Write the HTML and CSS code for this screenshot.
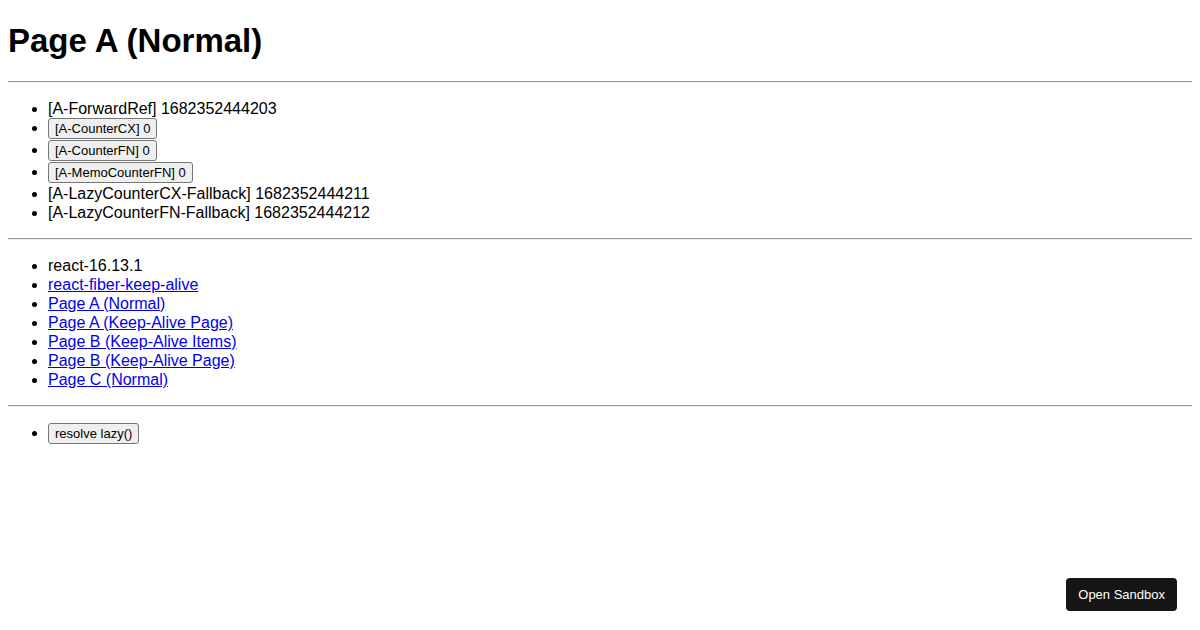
FILE: index.html
```html
<!DOCTYPE html>
<html>
<head>
<meta charset="utf-8">
<title>Page A (Normal)</title>
<link rel="stylesheet" href="styles.css">
</head>
<body>
<h1 class="title">Page A (Normal)</h1>
<hr class="rule">
<ul class="list">
  <li>[A-ForwardRef] 1682352444203</li>
  <li><button class="btn">[A-CounterCX] 0</button></li>
  <li><button class="btn">[A-CounterFN] 0</button></li>
  <li><button class="btn">[A-MemoCounterFN] 0</button></li>
  <li>[A-LazyCounterCX-Fallback] 1682352444211</li>
  <li>[A-LazyCounterFN-Fallback] 1682352444212</li>
</ul>
<hr class="rule">
<ul class="list">
  <li>react-16.13.1</li>
  <li><a href="#">react-fiber-keep-alive</a></li>
  <li><a href="#">Page A (Normal)</a></li>
  <li><a href="#">Page A (Keep-Alive Page)</a></li>
  <li><a href="#">Page B (Keep-Alive Items)</a></li>
  <li><a href="#">Page B (Keep-Alive Page)</a></li>
  <li><a href="#">Page C (Normal)</a></li>
</ul>
<hr class="rule">
<ul class="list">
  <li><button class="btn">resolve lazy()</button></li>
</ul>
<a class="sandbox" href="#">Open Sandbox</a>
</body>
</html>
```
FILE: styles.css
```css
body {
  font-family: "Liberation Sans", Arial, sans-serif;
  font-size: 16px;
  margin: 8px;
  color: #000;
}
.title {
  font-size: 33px;
  line-height: 37px;
  margin: 14px 0 22px;
}
.rule {
  margin: 8px 0;
  border: 0;
  border-top: 1px solid #9a9a9a;
  border-bottom: 1px solid #eeeeee;
  height: 0;
}
.list {
  margin: 16px 0;
  padding-left: 40px;
}
.list li {
  line-height: 19px;
}
a {
  color: #0000ee;
}
.btn {
  font-family: "Liberation Sans", Arial, sans-serif;
  font-size: 13px;
  line-height: 15px;
  padding: 2px 6px;
  margin: 0;
  border: 1px solid #767676;
  border-radius: 3px;
  background: #efefef;
  color: #000;
  vertical-align: top;
  margin-bottom: 1px;
}
.sandbox {
  position: fixed;
  right: 23px;
  bottom: 19px;
  background: #151515;
  color: #fff;
  text-decoration: none;
  font-family: "Liberation Sans", Arial, sans-serif;
  font-size: 13px;
  padding: 9px 12px;
  border-radius: 4px;
  line-height: 15px;
}
```
